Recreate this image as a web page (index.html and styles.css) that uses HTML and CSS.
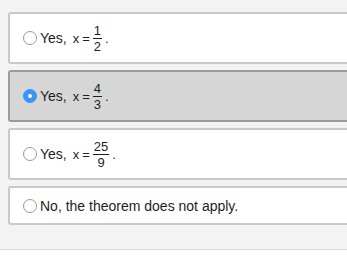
FILE: index.html
```html
<!DOCTYPE html>
<html>
<head>
<meta charset="utf-8">
<link rel="stylesheet" href="styles.css">
</head>
<body>
<div class="page">
  <div class="list">
    <label class="opt">
      <span class="radio"></span>
      <span class="txt">Yes,</span>
      <span class="math">x<span class="eq">=</span><span class="frac"><span class="num">1</span><span class="den">2</span></span><span class="dot">.</span></span>
    </label>
    <label class="opt sel">
      <span class="radio on"></span>
      <span class="txt">Yes,</span>
      <span class="math">x<span class="eq">=</span><span class="frac"><span class="num">4</span><span class="den">3</span></span><span class="dot">.</span></span>
    </label>
    <label class="opt">
      <span class="radio"></span>
      <span class="txt">Yes,</span>
      <span class="math">x<span class="eq">=</span><span class="frac"><span class="num">25</span><span class="den">9</span></span><span class="dot">.</span></span>
    </label>
    <label class="opt short">
      <span class="radio"></span>
      <span class="txt">No, the theorem does not apply.</span>
    </label>
  </div>
</div>
</body>
</html>
```
FILE: styles.css
```css
html, body {
  margin: 0;
  padding: 0;
  background: #ffffff;
  overflow: hidden;
}
body {
  width: 347px;
  height: 255px;
  font-family: "Liberation Sans", Arial, Helvetica, sans-serif;
  color: #1e1e1e;
}
.page {
  background: #f3f3f3;
  height: 250px;
  border-bottom: 1px solid #dcdcdc;
  box-sizing: border-box;
  overflow: hidden;
}
.list {
  display: flex;
  flex-direction: column;
  gap: 6px;
  padding: 12px 0 0 8px;
  width: 400px;
}
.opt {
  display: flex;
  align-items: center;
  box-sizing: border-box;
  height: 52px;
  background: #fff;
  border: 2px solid #c9c9c9;
  border-radius: 3px;
  padding-left: 13px;
  font-size: 14px;
}
.opt.sel {
  background: #d6d6d6;
  border-color: #9b9b9b;
}
.opt.short {
  height: 39px;
}
.radio {
  width: 14px;
  height: 14px;
  box-sizing: border-box;
  border: 1px solid #9a9a9a;
  border-radius: 50%;
  background: #fff;
  margin-right: 3px;
  flex: none;
  position: relative;
}
.radio.on {
  background: #3a94f5;
  border-color: #3a94f5;
}
.radio.on::after {
  content: "";
  position: absolute;
  left: 4px;
  top: 4px;
  width: 4px;
  height: 4px;
  border-radius: 50%;
  background: #fff;
}
.txt {
  white-space: nowrap;
}
.math {
  display: inline-flex;
  align-items: center;
  font-size: 13px;
  margin-left: 6px;
  padding-top: 1px;
}
.eq {
  margin: 0 2px 0 3px;
}
.frac {
  display: inline-flex;
  flex-direction: column;
  align-items: center;
  margin-left: 1px;
}
.num {
  line-height: 13px;
  padding: 0 1px 1px;
  border-bottom: 1px solid #1e1e1e;
  align-self: stretch;
  text-align: center;
}
.den {
  line-height: 13px;
  padding-top: 1px;
}
.dot {
  margin-left: 3px;
}
```
